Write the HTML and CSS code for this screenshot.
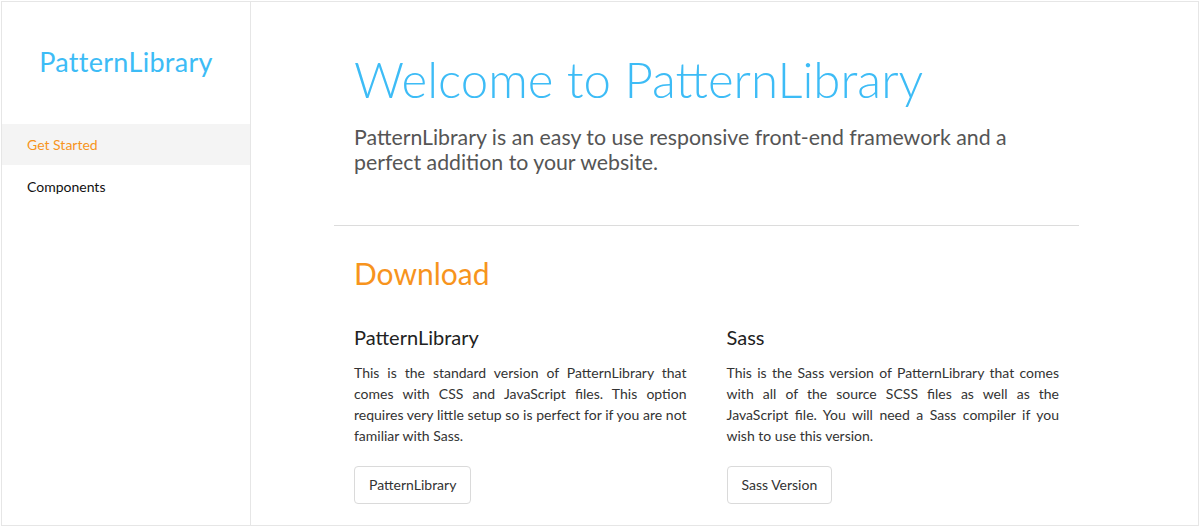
FILE: index.html
```html
<!DOCTYPE html>
<html lang="en">
<head>
<meta charset="utf-8">
<title>PatternLibrary</title>
<link rel="stylesheet" href="styles.css">
</head>
<body>
<div class="frame">
  <aside class="sidebar">
    <div class="brand">PatternLibrary</div>
    <nav class="nav">
      <a class="nav-item active" href="#">Get Started</a>
      <a class="nav-item" href="#">Components</a>
    </nav>
  </aside>
  <main class="main">
    <section class="intro">
      <h1 class="title">Welcome to PatternLibrary</h1>
      <p class="lead">PatternLibrary is an easy to use responsive front-end framework and a perfect addition to your website.</p>
    </section>
    <hr class="divider">
    <section class="download">
      <h2 class="section-title">Download</h2>
      <div class="cols">
        <div class="col">
          <h3 class="col-title">PatternLibrary</h3>
          <p class="col-text">This is the standard version of PatternLibrary that comes with CSS and JavaScript files. This option requires very little setup so is perfect for if you are not familiar with Sass.</p>
          <a class="btn" href="#">PatternLibrary</a>
        </div>
        <div class="col">
          <h3 class="col-title">Sass</h3>
          <p class="col-text">This is the Sass version of PatternLibrary that comes with all of the source SCSS files as well as the JavaScript file. You will need a Sass compiler if you wish to use this version.</p>
          <a class="btn" href="#">Sass Version</a>
        </div>
      </div>
    </section>
  </main>
</div>
</body>
</html>
```

FILE: styles.css
```css
* { box-sizing: border-box; }
html, body { margin: 0; padding: 0; background: #fff; }
body {
  font-family: "Lato", "Open Sans", sans-serif;
  color: #333;
  overflow: hidden;
}
.frame {
  margin: 1px;
  height: 525px;
  border: 1px solid #e6e6e6;
  display: flex;
  overflow: hidden;
}
.sidebar {
  width: 249px;
  flex: none;
  border-right: 1px solid #e6e6e6;
}
.brand {
  text-align: center;
  font-size: 27px;
  color: #3dbcf6;
  padding-top: 43px;
  height: 122px;
  letter-spacing: 0.3px;
}
.nav { display: flex; flex-direction: column; }
.nav-item {
  display: block;
  height: 41px;
  line-height: 41px;
  padding-left: 25px;
  font-size: 14px;
  color: #111;
  text-decoration: none;
}
.nav-item.active { background: #f4f4f4; color: #f7941d; }
.nav-item + .nav-item { line-height: 43px; }
.main {
  flex: 1;
  padding-left: 83px;
}
.intro { width: 745px; padding: 47px 20px 0; }
.title {
  margin: 0;
  font-size: 49.2px;
  font-weight: 300;
  color: #3dbcf6;
  line-height: 60px;
}
.lead {
  margin: 16px 0 0;
  font-size: 21.3px;
  line-height: 25px;
  color: #555;
  font-weight: 400;
  max-width: 690px;
}
.divider {
  width: 745px;
  margin: 50px 0 0;
  border: 0;
  border-top: 1px solid #dcdcdc;
}
.download { width: 745px; }
.section-title {
  margin: 0;
  padding: 27px 20px 0;
  font-size: 30px;
  font-weight: 400;
  color: #f7941d;
  line-height: 40px;
}
.cols { display: grid; grid-template-columns: 1fr 1fr; margin-top: 31px; }
.col { padding: 0 20px; }
.col-title {
  margin: 0;
  font-size: 20px;
  font-weight: 400;
  color: #222;
  line-height: 26px;
}
.col-text {
  margin: 12px 0 0;
  font-size: 14px;
  line-height: 21px;
  text-align: justify;
  color: #333;
}
.btn {
  display: inline-block;
  margin-top: 20px;
  height: 38px;
  line-height: 36px;
  padding: 0 14px;
  border: 1px solid #dadada;
  border-radius: 4px;
  font-size: 14px;
  color: #333;
  text-decoration: none;
}
```
